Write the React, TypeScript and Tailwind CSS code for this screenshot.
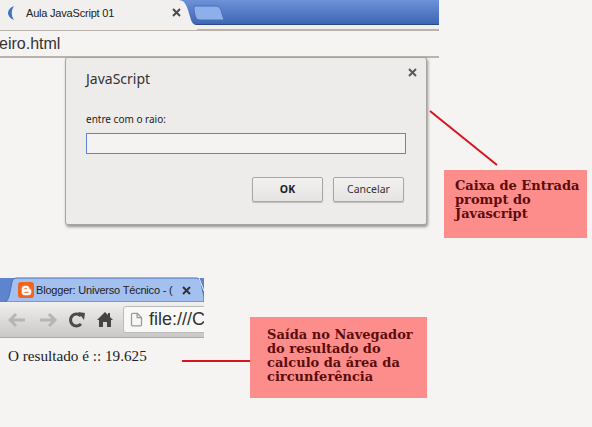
import { FaBloggerB } from "react-icons/fa";
import { FiFile } from "react-icons/fi";

const ui = "font-['Noto_Sans','Liberation_Sans',sans-serif]";
const chromeFont = "font-['Liberation_Sans',sans-serif]";
const callout =
  "absolute bg-[#fd8d8a] text-[#5b0c0c] font-['DejaVu_Serif',serif] font-bold text-[13px] leading-[14px]";

function TopBrowser() {
  return (
    <div className="w-[439px]">
      <div className="relative h-[25px] bg-gradient-to-b from-[#6d92d8] to-[#3f66b4] border-b border-[#2b4a8c]">
        <svg className="absolute left-0 top-0" width="230" height="30" viewBox="0 0 230 30">
          <path d="M0 0 H178 C184 0 186 4 188 10 L191 20 C192 23 194 25 197 25 V30 H0 Z" fill="#f1f0ee" />
          <path d="M194 6 H216 C219 6 220 8 221 10 L224 20 H200 C196 20 195 16 194 10 Z" fill="#8eb0ea" stroke="#4a6fb8" />
          <path d="M14 6 C6 9 6 17 14 20 C11 15 11 11 14 6 Z" fill="#3f74c4" />
          <path d="M173 9 L180 16 M180 9 L173 16" stroke="#4a4a4a" strokeWidth="2" />
        </svg>
        <span className={`absolute left-[26px] top-[3px] text-[11px] tracking-[-0.2px] leading-[20px] text-[#222] ${chromeFont}`}>
          Aula JavaScript 01
        </span>
      </div>
      <div className="h-[4px] bg-[#f1f0ee]" />
      <div className="h-[29px] bg-[#f5f4f3] border-t-2 border-[#b9b3ac] border-b-2 overflow-hidden">
        <span className={`block -ml-[1px] text-[16px] leading-[26px] text-[#333] ${chromeFont}`}>eiro.html</span>
      </div>
    </div>
  );
}

function BottomBrowser() {
  return (
    <div className="absolute left-0 top-[277px] w-[204px] overflow-hidden">
      <div className="relative h-[25px] bg-[#6f97dc] overflow-hidden">
        <svg className="absolute left-0 top-0" width="204" height="25" viewBox="0 0 204 25">
          <path d="M0 0 H204 V25 H0 Z" fill="#f4f3f2" />
          <path d="M0 1 H204 V25 H0 Z" fill="#5d84cd" />
          <path d="M5 25 C8 24 9 20 10 15 L12 5 C13 2 14 1 17 1 H196 C199 1 200 3 201 6 L204 20 V25 Z" fill="#a3c0ef" stroke="#4b70b8" />
          <path d="M199 1 L204 14" stroke="#e8eef9" />
        </svg>
        <div className="absolute left-[18px] top-[5px] flex h-[16px] w-[16px] items-center justify-center rounded-[3px] bg-[#f0641e] text-white">
          <FaBloggerB size={11} />
        </div>
        <span className={`absolute left-[36px] top-[4px] whitespace-nowrap text-[11px] tracking-[-0.2px] leading-[18px] text-[#222] ${chromeFont}`}>
          Blogger: Universo Técnico - (
        </span>
        <svg className="absolute left-[182px] top-[9px]" width="9" height="9" viewBox="0 0 9 9">
          <path d="M1 1 L8 8 M8 1 L1 8" stroke="#333" strokeWidth="2" />
        </svg>
      </div>
      <div className="relative h-[36px] bg-gradient-to-b from-[#f1f0ef] to-[#c9c8c6] border-b border-[#aaa]">
        <svg className="absolute left-[8px] top-[9px]" width="112" height="18" viewBox="0 0 112 18">
          <path d="M2 9 H17 M8 3 L2 9 L8 15" fill="none" stroke="#b5b5b5" strokeWidth="3" />
          <path d="M32 9 H46 M41 3 L47 9 L41 15" fill="none" stroke="#b5b5b5" strokeWidth="3" />
          <path d="M73 5 A6 6 0 1 0 73 13" fill="none" stroke="#4a4a4a" strokeWidth="3" />
          <path d="M70 1 L77 2 L76 9 Z" fill="#4a4a4a" />
          <path d="M97 1 L89 9 H91 V16 H95 V11 H99 V16 H103 V9 H105 L102 6 V2 H100 V4 Z" fill="#444" />
        </svg>
        <div className={`absolute left-[123px] top-[4px] flex h-[27px] w-[90px] items-center gap-[5px] rounded-[3px] border border-[#bbb] bg-[#f8f8f7] pl-[5px] text-[18px] text-[#333] ${chromeFont}`}>
          <FiFile size={15} className="shrink-0 text-[#999]" />
          <span>file:///C</span>
        </div>
      </div>
    </div>
  );
}

export default function App() {
  return (
    <div className="relative h-[427px] w-[592px] overflow-hidden bg-[#f5f4f3]">
      <TopBrowser />

      {/* dialog prompt */}
      <div className={`absolute left-[65px] top-[57px] flex h-[168px] w-[362px] flex-col rounded-[3px] border border-[#a8a5a1] bg-[#edeceb] pl-[20px] pr-[20px] shadow-[1px_2px_3px_rgba(0,0,0,0.4)] ${ui}`}>
        <div className="flex h-[40px] items-center justify-between">
          <span className="text-[14px] text-[#333]">JavaScript</span>
          <svg className="-mr-[11px] mb-[11px]" width="9" height="9" viewBox="0 0 9 9">
            <path d="M1 1 L8 8 M8 1 L1 8" stroke="#5a5a5a" strokeWidth="2" />
          </svg>
        </div>
        <span className="mt-[14px] text-[10px] leading-[14px] text-[#222]">entre com o raio:</span>
        <div className="mt-[7px] h-[21px] w-full border border-[#5f86c9] bg-[#f4f3f2]" />
        <div className="mt-[23px] flex justify-end gap-[10px] pr-[2px]">
          <button className="h-[25px] w-[71px] rounded-[2px] border border-[#a9a7a5] bg-gradient-to-b from-[#f2f1f0] to-[#e5e4e3] text-[10.5px] font-bold text-[#222] shadow-[0_1px_1px_rgba(0,0,0,0.2)]">
            OK
          </button>
          <button className="h-[25px] w-[71px] rounded-[2px] border border-[#a9a7a5] bg-gradient-to-b from-[#f2f1f0] to-[#e5e4e3] text-[10.5px] text-[#333] shadow-[0_1px_1px_rgba(0,0,0,0.2)]">
            Cancelar
          </button>
        </div>
      </div>

      <BottomBrowser />

      <p className="absolute left-[8px] top-[346px] font-['Liberation_Serif',serif] text-[15.2px] leading-[20px] text-[#222]">
        O resultado é :: 19.625
      </p>

      {/* annotation lines */}
      <svg className="absolute left-0 top-0" width="592" height="427" viewBox="0 0 592 427">
        <path d="M430 111 L497 165" stroke="#d8141c" strokeWidth="2" />
        <path d="M182 361 H250" stroke="#d8141c" strokeWidth="2" />
      </svg>

      <div className={`${callout} left-[444px] top-[170px] h-[68px] w-[143px] pl-[11px] pt-[9px]`}>
        Caixa de Entrada
        <br />
        prompt do
        <br />
        Javascript
      </div>
      <div className={`${callout} left-[250px] top-[317px] h-[81px] w-[177px] pl-[17px] pt-[11px]`}>
        Saída no Navegador
        <br />
        do resultado do
        <br />
        calculo da área da
        <br />
        circunferência
      </div>
    </div>
  );
}
